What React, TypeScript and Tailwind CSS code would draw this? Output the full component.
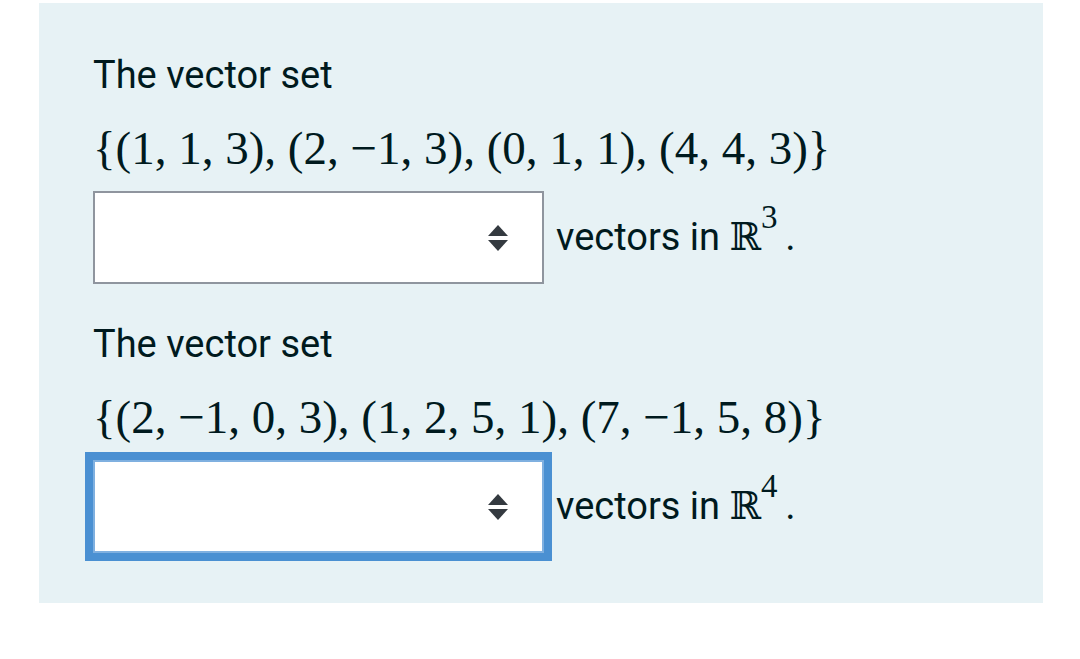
import React from "react";

function SelectArrows() {
  return (
    <svg width="22" height="26" viewBox="0 0 22 26" className="shrink-0">
      <path d="M11 0 L21 11 L1 11 Z" fill="#343a40" />
      <path d="M1 15 L21 15 L11 26 Z" fill="#343a40" />
    </svg>
  );
}

function Question({ math, dim, focused }: { math: string; dim: string; focused?: boolean }) {
  return (
    <div className="flex flex-col">
      <p className="font-['Roboto',sans-serif] text-[38px] leading-[57px] text-[#001a1e]">The vector set</p>
      <p className="mt-[14px] whitespace-pre font-['Liberation_Serif',serif] text-[47px] leading-[60px] text-[#001a1e]">
        {math}
      </p>
      <div className="mt-[13px] flex items-center">
        <div
          className={
            "flex h-[93px] w-[451px] items-center justify-end bg-white pr-[33px] " +
            (focused
              ? "border-2 border-[#7fb0e0] shadow-[0_0_0_8px_#4a90d2]"
              : "border-2 border-[#8f959e]")
          }
        >
          <SelectArrows />
        </div>
        <span className="ml-[12px] font-['Roboto',sans-serif] text-[38px] text-[#001a1e]">
          vectors in <span className="font-['DejaVu_Serif',serif]">ℝ</span>
          <sup className="top-[-22px] font-['Liberation_Serif',serif] text-[33px]">{dim}</sup>
          <span className="ml-[8px] font-['Liberation_Serif',serif]">.</span>
        </span>
      </div>
    </div>
  );
}

export default function App() {
  return (
    <div className="min-h-[659px] w-[1080px] bg-white pt-[3px]">
      <div className="ml-[39px] flex h-[600px] w-[1004px] flex-col gap-[32px] bg-[#e7f2f5] pl-[54px] pt-[44px]">
        <Question math={"{(1, 1, 3), (2, −1, 3), (0, 1, 1), (4, 4, 3)}"} dim="3" />
        <Question math={"{(2, −1, 0, 3), (1, 2, 5, 1), (7, −1, 5, 8)}"} dim="4" focused />
      </div>
    </div>
  );
}
